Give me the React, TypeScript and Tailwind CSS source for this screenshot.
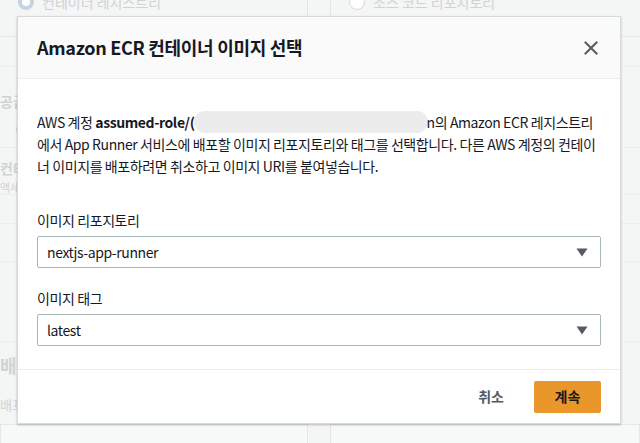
import React from "react";

const font = { fontFamily: '"Noto Sans CJK KR", "Noto Sans", sans-serif' };

function Caret() {
  return (
    <svg width="12" height="9" viewBox="0 0 12 9" className="shrink-0">
      <path d="M0.5 0.5 H11.5 L6 8.5 Z" fill="#545b64" />
    </svg>
  );
}

function SelectBox({ value }: { value: string }) {
  return (
    <div className="flex h-[32px] items-center justify-between rounded-[2px] border border-[#aab7b8] bg-white pl-[9px] pr-[12px] text-[14px] text-[#16191f]">
      <span>{value}</span>
      <Caret />
    </div>
  );
}

export default function App() {
  return (
    <div
      className="relative h-[443px] w-[640px] overflow-hidden bg-[#f4f5f5] text-[#16191f]"
      style={font}
    >
      {/* faded background page */}
      <div className="flex flex-col text-[#d0d3d3]">
        <div className="flex h-[37px] gap-[22px] border-b border-[#e6e8e8]">
          <div className="flex w-[308px] items-start gap-[8px] border-r border-[#e3e6e6] pl-[18px] -mt-[8px]">
            <span className="mt-[2px] h-[16px] w-[16px] rounded-full border-[4px] border-[#c5d4e2] bg-white" />
            <span className="text-[14px]">컨테이너 레지스트리</span>
          </div>
          <div className="flex flex-1 items-start gap-[8px] border-l border-[#e3e6e6] pl-[18px] -mt-[8px]">
            <span className="mt-[2px] h-[16px] w-[16px] rounded-full border border-[#d5d9d9] bg-white" />
            <span className="text-[14px]">소스 코드 리포지토리</span>
          </div>
        </div>
        <div className="h-[30px] border-b border-[#eceeee]" />
        <div className="pt-[24px] text-[14px] font-bold">공급자</div>
        <div className="flex h-[36px] items-center border-b border-[#eceeee] pl-[16px]">
          <span className="h-[16px] w-[16px] rounded-full border-[4px] border-[#d0dbe6] bg-white" />
        </div>
        <div className="pt-[10px] text-[14px] font-bold leading-[20px]">컨테이너</div>
        <div className="pt-[2px] text-[11px] leading-[14px]">액세스</div>
        <div className="flex h-[30px] items-center border-b border-t border-[#eceeee] pl-[20px] text-[12px]">1</div>
        <div className="h-[38px] border-b border-[#eceeee]" />
        <div className="h-[80px] border-b border-[#eceeee]" />
        <div className="pt-[10px] text-[18px] font-bold">배포 설정</div>
        <div className="pt-[16px] text-[13px]">배포 트리거</div>
        <div className="mt-[9px] flex gap-[22px]">
          <div className="h-[30px] w-[308px] border border-[#e3e8ea] bg-[#f7f8f8]" />
          <div className="h-[30px] flex-1 border border-[#e3e8ea] bg-[#f7f8f8]" />
        </div>
      </div>

      {/* modal */}
      <div className="absolute left-[17px] top-[16px] flex h-[408px] w-[604px] flex-col border border-[#d5dbdb] bg-white shadow-[0_1px_2px_rgba(0,0,0,0.25)]">
        <div className="flex h-[62px] items-center justify-between border-b border-[#eaeded] bg-[#fafafa] pl-[19px] pr-[22px]">
          <h2 className="text-[18px] font-bold tracking-[-0.3px]">Amazon ECR 컨테이너 이미지 선택</h2>
          <svg width="14" height="14" viewBox="0 0 14 14">
            <path d="M1.5 1.5 L12.5 12.5 M12.5 1.5 L1.5 12.5" stroke="#545b64" strokeWidth="2" strokeLinecap="square" />
          </svg>
        </div>
        <div className="flex flex-1 flex-col px-[19px] pt-[32px] tracking-[-0.4px]">
          <div className="text-[14px] leading-[22px] text-[#16191f]">
            <div className="flex items-center whitespace-nowrap">
              <span>AWS 계정&nbsp;</span>
              <span className="font-bold">assumed-role/(</span>
              <span className="-ml-[1px] h-[22px] w-[234px] rounded-full bg-[#ececec]" />
              <span className="-ml-[1px]">n의 Amazon ECR 레지스트리</span>
            </div>
            <div className="whitespace-nowrap">
              에서 App Runner 서비스에 배포할 이미지 리포지토리와 태그를 선택합니다. 다른 AWS 계정의 컨테이
            </div>
            <div className="whitespace-nowrap">너 이미지를 배포하려면 취소하고 이미지 URI를 붙여넣습니다.</div>
          </div>
          <div className="mt-[32px] flex flex-col gap-[5px]">
            <label className="text-[14px] leading-[22px]">이미지 리포지토리</label>
            <SelectBox value="nextjs-app-runner" />
          </div>
          <div className="mt-[19px] flex flex-col gap-[5px]">
            <label className="text-[14px] leading-[22px]">이미지 태그</label>
            <SelectBox value="latest" />
          </div>
        </div>
        <div className="flex h-[54px] items-center justify-end gap-[30px] border-t border-[#eaeded] pr-[19px]">
          <button className="text-[14px] font-bold text-[#545b64]">취소</button>
          <button className="flex h-[32px] w-[67px] items-center justify-center rounded-[2px] bg-[#e9962a] text-[14px] font-bold text-[#16191f]">
            계속
          </button>
        </div>
      </div>
    </div>
  );
}
